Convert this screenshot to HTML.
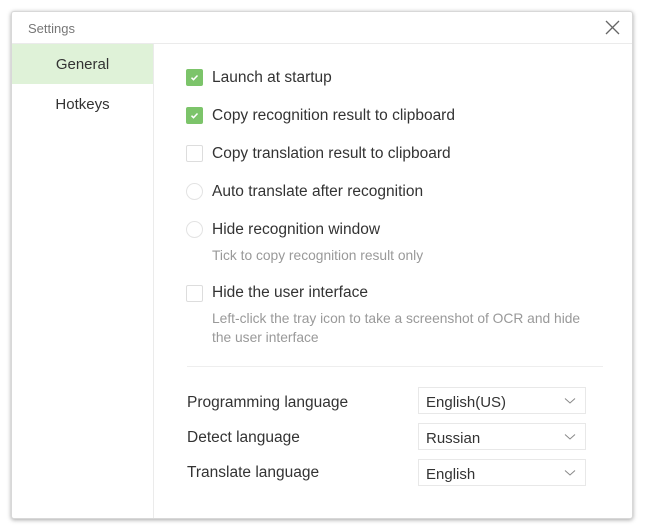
<!DOCTYPE html>
<html><head><meta charset="utf-8"><style>
body{margin:0;width:645px;height:530px;background:#fff;font-family:"Liberation Sans","DejaVu Sans",sans-serif;position:relative;overflow:hidden;color:#333}
.win{position:absolute;left:11px;top:11px;width:622px;height:508px;background:#fff;border:1px solid #d8d8d8;box-shadow:0 1px 4px rgba(0,0,0,.35);border-radius:3px;box-sizing:border-box}
.title{position:absolute;left:16px;top:9px;font-size:13px;color:#777}
.hr{position:absolute;left:0;right:0;top:31px;height:1px;background:#ebebeb}
.side{position:absolute;left:0;top:32px;width:141px;bottom:0;border-right:1px solid #ebebeb}
.sel{position:absolute;left:0;top:0;width:141px;height:40px;background:#dff2d8}
.nav{position:absolute;width:141px;text-align:center;font-size:15px;color:#333}
.a{position:absolute;font-size:15.5px;color:#333;white-space:nowrap}
.s{position:absolute;font-size:13.8px;color:#999;white-space:nowrap;line-height:19px}
.cb{position:absolute;width:17px;height:17px;border:1px solid #ddd;border-radius:2px;box-sizing:border-box;background:#fff}
.cb.on{background:#7cc46a;border-color:#7cc46a}
.rd{position:absolute;width:17px;height:17px;border:1px solid #e3e3e3;border-radius:50%;box-sizing:border-box}
.dd{position:absolute;left:406px;width:168px;height:27px;border:1px solid #e8e8e8;box-sizing:border-box;font-size:15px;color:#333;padding:6px 0 0 7px}
.dd svg{position:absolute;right:9px;top:9px}
</style></head><body>
<div class="win">
<div class="title">Settings</div>
<svg style="position:absolute;left:593px;top:8px" width="15" height="15" viewBox="0 0 15 15"><path d="M1 1L14 14M14 1L1 14" stroke="#666" stroke-width="1.3"/></svg>
<div class="hr"></div>
<div class="side"><div class="sel"></div>
<div class="nav" style="top:12px">General</div>
<div class="nav" style="top:52px">Hotkeys</div></div>

<div class="cb on" style="left:174px;top:57px"><svg width="17" height="17" viewBox="0 0 17 17" style="position:absolute;left:-1px;top:-1px"><path d="M5.5 8.7L7.5 10.7L11.5 6.5" stroke="#fff" stroke-width="1.5" fill="none"/></svg></div>
<div class="a" style="left:200px;top:57px">Launch at startup</div>
<div class="cb on" style="left:174px;top:95px"><svg width="17" height="17" viewBox="0 0 17 17" style="position:absolute;left:-1px;top:-1px"><path d="M5.5 8.7L7.5 10.7L11.5 6.5" stroke="#fff" stroke-width="1.5" fill="none"/></svg></div>
<div class="a" style="left:200px;top:95px">Copy recognition result to clipboard</div>
<div class="cb" style="left:174px;top:133px"></div>
<div class="a" style="left:200px;top:133px">Copy translation result to clipboard</div>
<div class="rd" style="left:174px;top:171px"></div>
<div class="a" style="left:200px;top:171px">Auto translate after recognition</div>
<div class="rd" style="left:174px;top:209px"></div>
<div class="a" style="left:200px;top:209px">Hide recognition window</div>
<div class="s" style="left:200px;top:234px">Tick to copy recognition result only</div>
<div class="cb" style="left:174px;top:273px"></div>
<div class="a" style="left:200px;top:272px">Hide the user interface</div>
<div class="s" style="left:200px;top:297px">Left-click the tray icon to take a screenshot of OCR and hide<br>the user interface</div>
<div style="position:absolute;left:175px;width:416px;top:354px;height:1px;background:#eee"></div>

<div class="a" style="left:175px;top:382px">Programming language</div>
<div class="a" style="left:175px;top:417px">Detect language</div>
<div class="a" style="left:175px;top:452px">Translate language</div>
<div class="dd" style="top:375px">English(US)<svg width="12" height="8" viewBox="0 0 12 8"><path d="M1 1.5L6 6L11 1.5" stroke="#888" fill="none"/></svg></div>
<div class="dd" style="top:411px">Russian<svg width="12" height="8" viewBox="0 0 12 8"><path d="M1 1.5L6 6L11 1.5" stroke="#888" fill="none"/></svg></div>
<div class="dd" style="top:447px">English<svg width="12" height="8" viewBox="0 0 12 8"><path d="M1 1.5L6 6L11 1.5" stroke="#888" fill="none"/></svg></div>
</div>
</body></html>
